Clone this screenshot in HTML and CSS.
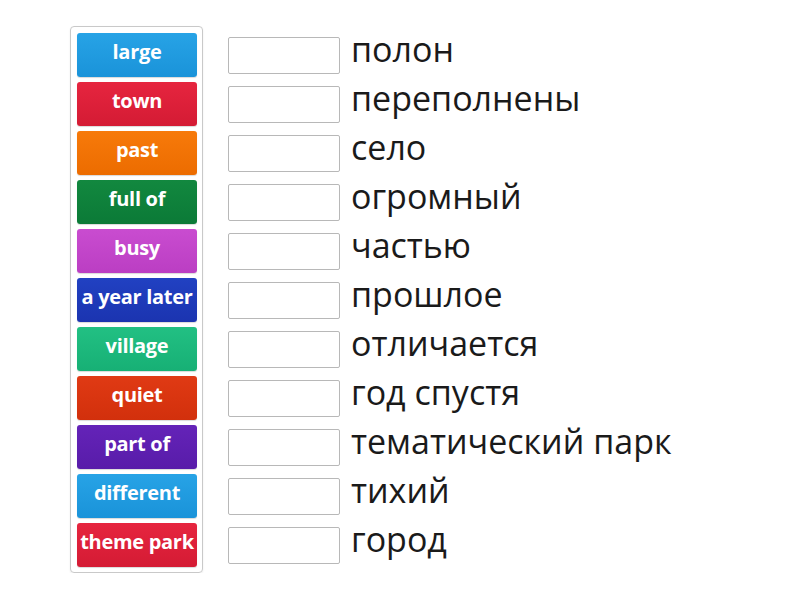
FILE: index.html
```html
<!DOCTYPE html>
<html>
<head>
<meta charset="utf-8">
<link rel="stylesheet" href="styles.css">
</head>
<body>
<div class="page">
  <div class="bank">
    <div class="tile c-blue">large</div>
    <div class="tile c-red">town</div>
    <div class="tile c-orange">past</div>
    <div class="tile c-green">full of</div>
    <div class="tile c-magenta">busy</div>
    <div class="tile c-navy">a year later</div>
    <div class="tile c-teal">village</div>
    <div class="tile c-vermilion">quiet</div>
    <div class="tile c-purple">part of</div>
    <div class="tile c-blue">different</div>
    <div class="tile c-red">theme park</div>
  </div>
  <div class="targets">
    <div class="row"><div class="slot"></div><span class="word">полон</span></div>
    <div class="row"><div class="slot"></div><span class="word">переполнены</span></div>
    <div class="row"><div class="slot"></div><span class="word">село</span></div>
    <div class="row"><div class="slot"></div><span class="word">огромный</span></div>
    <div class="row"><div class="slot"></div><span class="word">частью</span></div>
    <div class="row"><div class="slot"></div><span class="word">прошлое</span></div>
    <div class="row"><div class="slot"></div><span class="word">отличается</span></div>
    <div class="row"><div class="slot"></div><span class="word">год спустя</span></div>
    <div class="row"><div class="slot"></div><span class="word">тематический парк</span></div>
    <div class="row"><div class="slot"></div><span class="word">тихий</span></div>
    <div class="row"><div class="slot"></div><span class="word">город</span></div>
  </div>
</div>
</body>
</html>
```

FILE: styles.css
```css
html, body {
  margin: 0;
  padding: 0;
  background: #ffffff;
  font-family: "Open Sans", "Liberation Sans", sans-serif;
}
.page {
  display: flex;
  align-items: flex-start;
  padding: 26px 0 0 70px;
  gap: 25px;
}
.bank {
  display: flex;
  flex-direction: column;
  gap: 5px;
  padding: 6px 5px 5px 6px;
  border: 1px solid #c9c9c9;
  border-radius: 4px;
  box-shadow: 0 1px 2px rgba(0,0,0,0.08);
}
.tile {
  width: 120px;
  height: 44px;
  border-radius: 3px;
  display: flex;
  align-items: center;
  justify-content: center;
  color: #ffffff;
  font-weight: 700;
  font-size: 20px;
  letter-spacing: -0.3px;
  white-space: nowrap;
  padding-bottom: 7px;
  box-sizing: border-box;
  box-shadow: 0 1px 1px rgba(0,0,0,0.15);
}
.c-blue { background: linear-gradient(#27a3e6, #1a93d9); }
.c-red { background: linear-gradient(#e6253f, #d41b34); }
.c-orange { background: linear-gradient(#f77a0a, #ec6c00); }
.c-green { background: linear-gradient(#12883f, #0b7a37); }
.c-magenta { background: linear-gradient(#c94cd0, #bb3ec3); }
.c-navy { background: linear-gradient(#2141c2, #1b34b0); }
.c-teal { background: linear-gradient(#22c083, #17b075); }
.c-vermilion { background: linear-gradient(#e03a14, #d2300c); }
.c-purple { background: linear-gradient(#6423b8, #581ca9); }
.targets {
  display: flex;
  flex-direction: column;
  gap: 5px;
  padding-top: 7px;
}
.row {
  height: 44px;
  display: flex;
  align-items: center;
  gap: 11px;
}
.slot {
  width: 110px;
  height: 35px;
  border: 1px solid #b8b8b8;
  border-radius: 2px;
  background: #fff;
}
.word {
  font-size: 34px;
  color: #1a1a1a;
  white-space: nowrap;
  line-height: 1;
  padding-bottom: 12px;
}
```
